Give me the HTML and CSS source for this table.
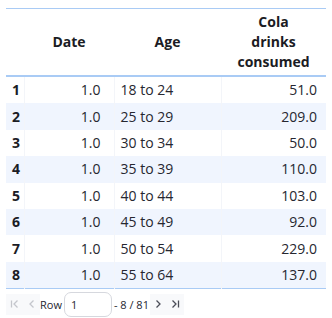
FILE: index.html
```html
<!DOCTYPE html>
<html>
<head>
<meta charset="utf-8">
<link rel="stylesheet" href="styles.css">
</head>
<body>
<div class="wrap">
  <table class="grid">
    <thead>
      <tr>
        <th class="c-idx"></th>
        <th class="c-date">Date</th>
        <th class="c-age">Age</th>
        <th class="c-cola">Cola<br>drinks<br>consumed</th>
      </tr>
    </thead>
    <tbody>
      <tr><td class="c-idx">1</td><td class="c-date">1.0</td><td class="c-age">18 to 24</td><td class="c-cola">51.0</td></tr>
      <tr><td class="c-idx">2</td><td class="c-date">1.0</td><td class="c-age">25 to 29</td><td class="c-cola">209.0</td></tr>
      <tr><td class="c-idx">3</td><td class="c-date">1.0</td><td class="c-age">30 to 34</td><td class="c-cola">50.0</td></tr>
      <tr><td class="c-idx">4</td><td class="c-date">1.0</td><td class="c-age">35 to 39</td><td class="c-cola">110.0</td></tr>
      <tr><td class="c-idx">5</td><td class="c-date">1.0</td><td class="c-age">40 to 44</td><td class="c-cola">103.0</td></tr>
      <tr><td class="c-idx">6</td><td class="c-date">1.0</td><td class="c-age">45 to 49</td><td class="c-cola">92.0</td></tr>
      <tr><td class="c-idx">7</td><td class="c-date">1.0</td><td class="c-age">50 to 54</td><td class="c-cola">229.0</td></tr>
      <tr><td class="c-idx">8</td><td class="c-date">1.0</td><td class="c-age">55 to 64</td><td class="c-cola">137.0</td></tr>
    </tbody>
  </table>
  <div class="pager">
    <div class="btns off">
      <span class="btn"><svg width="10" height="10" viewBox="0 0 10 10"><path d="M1.5 1.5v7M7.5 1.5L4 5l3.5 3.5" fill="none" stroke="currentColor" stroke-width="1.3"/></svg></span>
      <span class="btn"><svg width="10" height="10" viewBox="0 0 10 10"><path d="M6.5 1.5L3 5l3.5 3.5" fill="none" stroke="currentColor" stroke-width="1.3"/></svg></span>
    </div>
    <span class="lbl">Row</span>
    <input class="rowin" type="text" value="1">
    <span class="count">- 8 / 81</span>
    <div class="btns on">
      <span class="btn"><svg width="10" height="10" viewBox="0 0 10 10"><path d="M3.5 1.5L7 5l-3.5 3.5" fill="none" stroke="currentColor" stroke-width="1.3"/></svg></span>
      <span class="btn"><svg width="10" height="10" viewBox="0 0 10 10"><path d="M2.5 1.5L6 5l-3.5 3.5M8.5 1.5v7" fill="none" stroke="currentColor" stroke-width="1.3"/></svg></span>
    </div>
  </div>
</div>
</body>
</html>
```
FILE: styles.css
```css
html, body {
  margin: 0;
  padding: 0;
  background: #ffffff;
}
body {
  font-family: "Open Sans", "Noto Sans", sans-serif;
  color: #262730;
}
.wrap {
  margin: 8px 6px 0 6px;
  width: 320px;
}
.grid {
  width: 320px;
  border-collapse: collapse;
  table-layout: fixed;
  font-size: 14px;
  border-top: 1px solid #a9cbf5;
  border-bottom: 1px solid #a9cbf5;
}
.grid th {
  font-weight: 700;
  text-align: center;
  line-height: 20px;
  height: 66px;
  padding: 0;
  color: #1b1c24;
  border-bottom: 2px solid #a9cbf5;
  vertical-align: middle;
}
.grid td {
  height: 26.4px;
  padding: 0;
  line-height: 20px;
  border-left: 1px solid #f3f5f9;
  white-space: nowrap;
}
.grid tbody tr:nth-child(even) td {
  background: #f0f5fe;
}
.grid td:first-child {
  border-left: none;
}
.c-idx { width: 18px; }
.c-date { width: 90px; }
.c-age { width: 107px; }
.c-cola { width: 105px; }
td.c-idx {
  font-weight: 700;
  padding-left: 6px;
  color: #1b1c24;
}
td.c-date {
  text-align: right;
  padding-right: 13px;
}
td.c-age {
  text-align: left;
  padding-left: 6px;
}
td.c-cola {
  text-align: right;
  padding-right: 9px;
}
.pager {
  display: flex;
  align-items: center;
  height: 30px;
  font-size: 11px;
  color: #262730;
}
.btns {
  display: flex;
  background: #f8f9fb;
  height: 21px;
  align-items: center;
}
.btn {
  display: flex;
  align-items: center;
  justify-content: center;
  width: 17px;
  height: 21px;
}
.btns.off { color: #c4c6cc; }
.btns.on { color: #4a4d57; margin-left: 1px; }
.rowin {
  width: 48px;
  height: 25px;
  box-sizing: border-box;
  margin: 0 2px;
  border: 1px solid #d6d8de;
  border-radius: 7px;
  padding: 0 6px;
  font: 11px "Open Sans", sans-serif;
  color: #262730;
  background: #fff;
}
```
